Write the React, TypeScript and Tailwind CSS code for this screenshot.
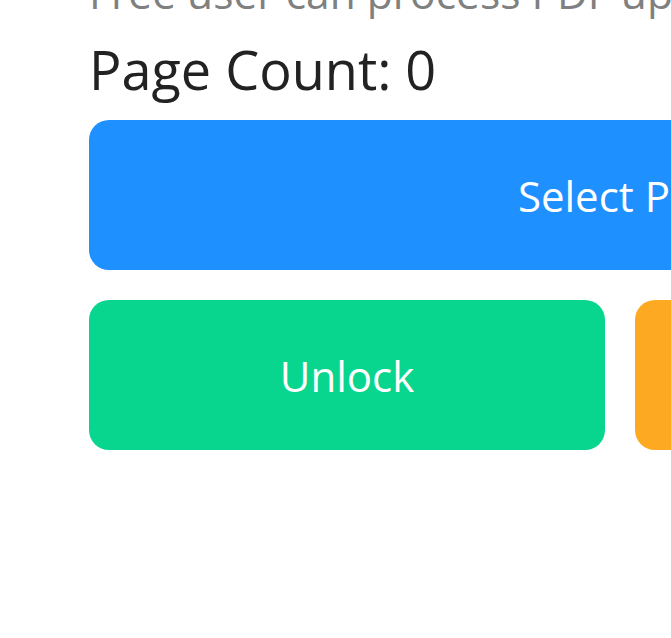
import React from 'react';

const App: React.FC = () => {
  const pageCount = 0;

  return (
    <div className="min-h-screen bg-white overflow-hidden font-['Open_Sans',sans-serif]">
      <div className="w-[1151px] pl-[89px]">
        {/* Free plan notice */}
        <p className="-mt-[33px] text-[42.5px] leading-[52px] text-[#808080] whitespace-nowrap">
          Free user can process PDF up to 10 pages
        </p>

        <h2 className="mt-[13px] text-[54px] leading-[74px] text-[#222222]">
          Page Count: {pageCount}
        </h2>

        {/* Actions */}
        <div className="mt-[14px] grid grid-cols-2 gap-[30px]">
          <button
            type="button"
            className="col-span-2 h-[150px] rounded-[20px] bg-[#1e90ff] text-white text-[42px] flex items-center justify-center"
          >
            Select PDF
          </button>
          <button
            type="button"
            className="h-[150px] rounded-[20px] bg-[#08d68f] text-white text-[42px] flex items-center justify-center"
          >
            Unlock
          </button>
          <button
            type="button"
            className="h-[150px] rounded-[20px] bg-[#fda922] text-white text-[42px] flex items-center justify-center"
          >
            Reset
          </button>
        </div>
      </div>
    </div>
  );
};

export default App;
